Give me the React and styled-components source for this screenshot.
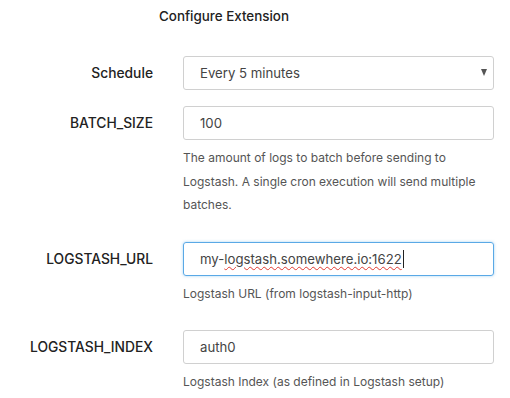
import React from "react";
import styled, { createGlobalStyle } from "styled-components";

const Global = createGlobalStyle`
  html, body { margin: 0; padding: 0; background: #fff; }
  body { font-family: "Inter", "Liberation Sans", sans-serif; color: #333; }
`;

const Page = styled.div`
  width: 510px;
  height: 398px;
  overflow: hidden;
  box-sizing: border-box;
  padding-top: 7px;
`;

const Title = styled.h4`
  margin: 0 0 31px 159px;
  font-size: 13.4px;
  font-weight: 500;
  line-height: 18px;
  color: #222;
`;

const Form = styled.div`
  display: grid;
  grid-template-columns: 153px 311px;
  column-gap: 30px;
  align-items: start;
`;

const Label = styled.div`
  text-align: right;
  font-size: 13.8px;
  font-weight: 500;
  color: #222;
  line-height: 34px;
  height: 34px;
`;

const Control = styled.div`
  display: flex;
  flex-direction: column;
  margin-bottom: ${(p) => p.$mb}px;
`;

const Field = styled.div`
  position: relative;
  box-sizing: border-box;
  height: 34px;
  border: 1px solid ${(p) => (p.$focus ? "#5aa9e6" : "#d0d0d0")};
  border-radius: 3px;
  box-shadow: ${(p) => (p.$focus ? "0 0 3px rgba(90,169,230,0.55)" : "none")};
  padding: 0 16px;
  display: flex;
  align-items: center;
  font-size: 13.2px;
  color: #444;
  white-space: nowrap;
`;

const Squiggle = styled.span`
  text-decoration: underline wavy #e0392f;
  text-decoration-thickness: 1px;
  text-underline-offset: 2px;
`;

const Caret = styled.span`
  display: inline-block;
  width: 1px;
  height: 18px;
  background: #222;
  margin-left: 1px;
`;

const Arrow = styled.span`
  position: absolute;
  right: 6px;
  top: 12px;
  width: 0;
  height: 0;
  border-left: 3.5px solid transparent;
  border-right: 3.5px solid transparent;
  border-top: 7px solid #555;
`;

const Help = styled.p`
  margin: ${(p) => p.$mt || 6}px 0 0;
  font-size: 12px;
  line-height: 23.5px;
  color: #555;
`;

export default function App() {
  return (
    <Page>
      <Global />
      <Title>Configure Extension</Title>
      <Form>
        <Label>Schedule</Label>
        <Control $mb={16}>
          <Field>
            Every 5 minutes
            <Arrow />
          </Field>
        </Control>

        <Label>BATCH_SIZE</Label>
        <Control $mb={25}>
          <Field>100</Field>
          <Help>
            The amount of logs to batch before sending to Logstash. A single cron execution will send multiple batches.
          </Help>
        </Control>

        <Label>LOGSTASH_URL</Label>
        <Control $mb={25}>
          <Field $focus>
            my-<Squiggle>logstash.somewhere.io:1622</Squiggle>
            <Caret />
          </Field>
          <Help>Logstash URL (from logstash-input-http)</Help>
        </Control>

        <Label>LOGSTASH_INDEX</Label>
        <Control $mb={0}>
          <Field>auth0</Field>
          <Help>Logstash Index (as defined in Logstash setup)</Help>
        </Control>
      </Form>
    </Page>
  );
}
